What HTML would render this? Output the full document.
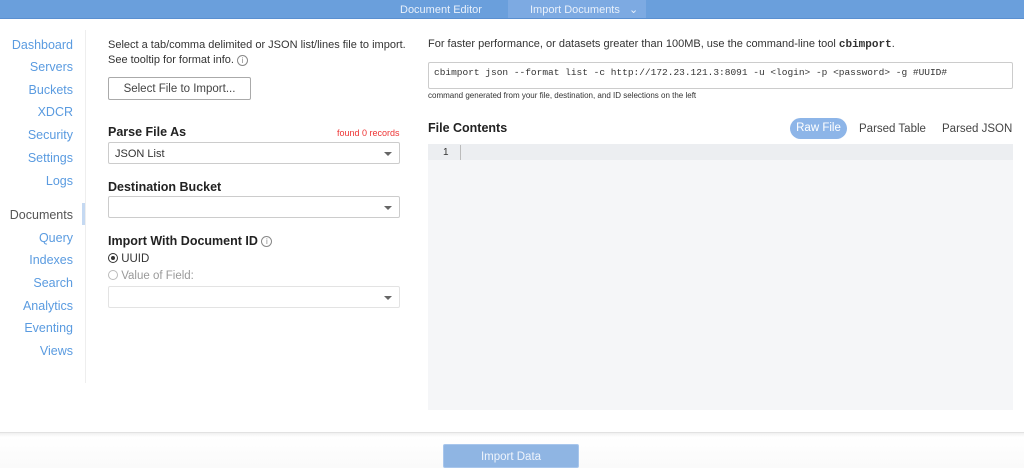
<!DOCTYPE html>
<html><head><style>
*{box-sizing:border-box;margin:0;padding:0}
body{width:1024px;height:468px;overflow:hidden;background:#fff;font-family:"Liberation Sans",sans-serif;color:#333;position:relative}
.top{position:absolute;left:0;top:0;width:1024px;height:19px;background:#6a9fdc;border-bottom:1px solid #5a8fd0}
.top span{position:absolute;top:4px;font-size:11px;line-height:12px;color:#e8f0fb}
.tab2{position:absolute;left:508px;top:0;width:138px;height:18px;background:#7daae2}
.nav{position:absolute;right:951px;text-align:right;font-size:12.5px;line-height:15px;color:#5a9be0}
.sep{position:absolute;left:85px;top:30px;width:1px;height:353px;background:#eee}
.abs{position:absolute}
.lbl{font-size:12.5px;font-weight:bold;color:#222;line-height:15px}
.sel{position:absolute;left:108px;width:292px;height:22px;border:1px solid #ccc;border-radius:2px;font-size:11px;line-height:13px;padding:5px 6px 0;background:#fff}
.sel:after{content:"";position:absolute;right:7px;top:9px;border:4px solid transparent;border-top:4px solid #666}
.info{display:inline-block;width:11px;height:11px;border:1px solid #888;border-radius:50%;font-size:8px;text-align:center;line-height:9px;color:#888;vertical-align:middle;font-weight:normal}
</style></head><body>
<div class="top"><div class="tab2"></div><span style="left:400px">Document Editor</span><span style="left:530px">Import Documents&nbsp;&nbsp;&nbsp;⌄</span></div>
<div class="nav" style="top:38px">Dashboard</div>
<div class="nav" style="top:60px">Servers</div>
<div class="nav" style="top:83px">Buckets</div>
<div class="nav" style="top:105px">XDCR</div>
<div class="nav" style="top:128px">Security</div>
<div class="nav" style="top:151px">Settings</div>
<div class="nav" style="top:174px">Logs</div>
<div class="nav" style="top:208px;color:#555">Documents</div>
<div class="nav" style="top:231px">Query</div>
<div class="nav" style="top:253px">Indexes</div>
<div class="nav" style="top:276px">Search</div>
<div class="nav" style="top:299px">Analytics</div>
<div class="nav" style="top:321px">Eventing</div>
<div class="nav" style="top:344px">Views</div>
<div class="sep"></div>
<div class="abs" style="left:82px;top:203px;width:3px;height:22px;background:#c5d9f2"></div>
<div class="abs" style="left:108px;top:38px;font-size:11px;line-height:15px;color:#333">Select a tab/comma delimited or JSON list/lines file to import.<br>See tooltip for format info. <span class="info">i</span></div>
<div class="abs" style="left:108px;top:77px;width:143px;height:23px;border:1px solid #aaa;border-radius:2px;font-size:11.5px;text-align:center;line-height:23px;color:#444">Select File to Import...</div>
<div class="abs lbl" style="left:108px;top:125px">Parse File As</div>
<div class="abs" style="left:337px;top:128px;font-size:9px;color:#e33">found 0 records</div>
<div class="sel" style="top:142px">JSON List</div>
<div class="abs lbl" style="left:108px;top:180px">Destination Bucket</div>
<div class="sel" style="top:196px"></div>
<div class="abs lbl" style="left:108px;top:234px">Import With Document ID <span class="info">i</span></div>
<div class="abs" style="left:108px;top:252px;font-size:11.5px;line-height:14px"><span style="display:inline-block;width:10px;height:10px;border:1px solid #333;border-radius:50%;vertical-align:-1px;position:relative"><span style="position:absolute;left:2px;top:2px;width:4px;height:4px;background:#333;border-radius:50%"></span></span> UUID</div>
<div class="abs" style="left:108px;top:269px;font-size:11.5px;line-height:14px;color:#999"><span style="display:inline-block;width:10px;height:10px;border:1px solid #bbb;border-radius:50%;vertical-align:-1px"></span> Value of Field:</div>
<div class="sel" style="top:286px;border-color:#e3e3e3"></div>
<div class="abs" style="left:428px;top:38px;font-size:11px;line-height:13px">For faster performance, or datasets greater than 100MB, use the command-line tool <b style="font-family:'Liberation Mono',monospace">cbimport</b>.</div>
<div class="abs" style="left:428px;top:62px;width:585px;height:27px;border:1px solid #ccc;border-radius:2px;font-family:'Liberation Mono',monospace;font-size:9.5px;padding:4px 5px;line-height:11px">cbimport json --format list -c http://172.23.121.3:8091 -u &lt;login&gt; -p &lt;password&gt; -g #UUID#</div>
<div class="abs" style="left:428px;top:91px;font-size:8px;color:#333">command generated from your file, destination, and ID selections on the left</div>
<div class="abs lbl" style="left:428px;top:121px">File Contents</div>
<div class="abs" style="left:790px;top:118px;width:57px;height:21px;border-radius:11px;background:#8db5e8;color:#fff;font-size:11.5px;text-align:center;line-height:21px">Raw File</div>
<div class="abs" style="left:859px;top:122px;font-size:11.5px;line-height:14px;color:#444">Parsed Table</div>
<div class="abs" style="left:942px;top:122px;font-size:11.5px;line-height:14px;color:#444">Parsed JSON</div>
<div class="abs" style="left:428px;top:144px;width:585px;height:266px;background:#f5f6f8"></div>
<div class="abs" style="left:428px;top:144px;width:585px;height:16px;background:#eceef1"></div>
<div class="abs" style="left:443px;top:147px;font-size:10px;line-height:11px;color:#333">1</div>
<div class="abs" style="left:460px;top:145px;width:1px;height:15px;background:#bbb"></div>
<div class="abs" style="left:0;top:432px;width:1024px;height:36px;background:linear-gradient(#f0f0f0,#fff 4px,#fafafa);border-top:1px solid #e2e2e2"></div>
<div class="abs" style="left:443px;top:444px;width:136px;height:24px;background:#8fb5e3;border:1px solid #a8c6ec;border-radius:2px;color:#eef4fc;font-size:11.5px;text-align:center;line-height:24px">Import Data</div>
</body></html>
